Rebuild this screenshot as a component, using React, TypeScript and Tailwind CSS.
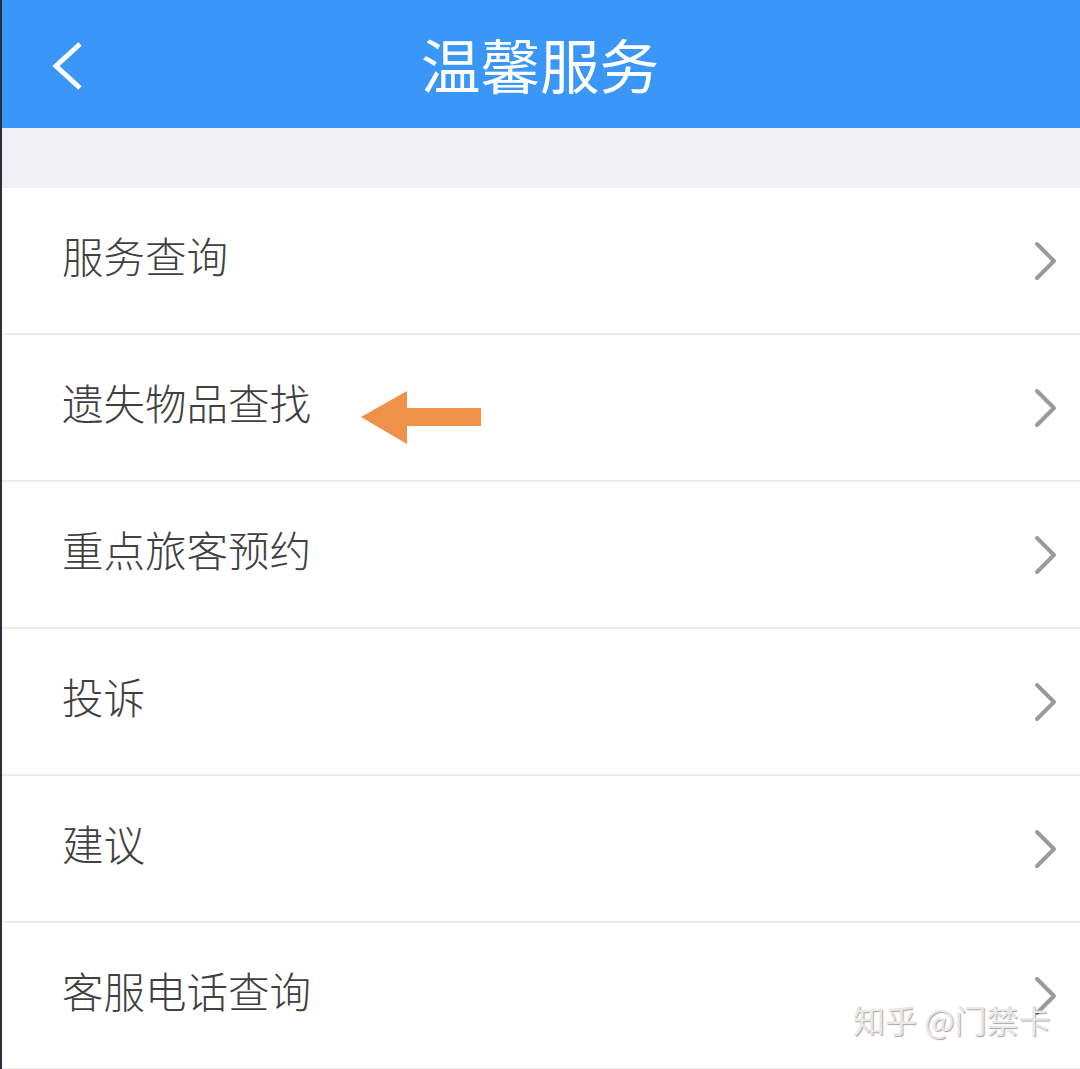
const items = ["服务查询", "遗失物品查找", "重点旅客预约", "投诉", "建议", "客服电话查询"];

function ChevronRight() {
  return (
    <svg width="28" height="40" viewBox="0 0 28 40" fill="none">
      <path d="M5 3 L22 20 L5 37" stroke="#9a9a9a" strokeWidth="4" strokeLinecap="round" strokeLinejoin="round" />
    </svg>
  );
}

function OrangeArrow() {
  return (
    <svg width="122" height="54" viewBox="0 0 122 54">
      <path d="M0 26 L46 0 L46 17 L120 17 L120 35 L46 35 L46 53 Z" fill="#f0914a" />
    </svg>
  );
}

export default function App() {
  return (
    <div className="relative w-[1080px] h-[1069px] overflow-hidden bg-white font-['Noto_Sans_CJK_SC','Noto_Sans',sans-serif]">
      {/* Header */}
      <div className="relative flex h-[128px] items-center justify-center bg-[#3a97f8]">
        <div className="absolute left-[48px] top-[40px]">
          <svg width="36" height="52" viewBox="0 0 36 52" fill="none">
            <path d="M32 4 L8 26 L32 48" stroke="white" strokeWidth="5" strokeLinejoin="miter" />
          </svg>
        </div>
        <span className="text-[59.5px] leading-none text-white">温馨服务</span>
      </div>

      {/* Gray spacer */}
      <div className="h-[60px] bg-[#efeff4]" />

      {/* List */}
      <div className="flex flex-col">
        {items.map((label, i) => (
          <div key={label} className="flex h-[147px] items-center border-b-2 border-[#ececec] pl-[62px] pr-[20px]">
            <span className="mb-[10px] text-[41.5px] font-light leading-none text-[#404040]">{label}</span>
            {i === 1 && (
              <div className="ml-[50px] mt-[20px]">
                <OrangeArrow />
              </div>
            )}
            <div className="ml-auto flex items-center">
              <ChevronRight />
            </div>
          </div>
        ))}
      </div>

      {/* Watermark */}
      <div className="absolute left-[853px] top-[1003px] text-[32px] leading-none text-[#e8e8e8] [text-shadow:1px_1px_1px_rgba(0,0,0,0.35)]">
        知乎 @门禁卡
      </div>

      {/* Dark left edge */}
      <div className="absolute left-0 top-0 h-full w-[2px] bg-[#2b2f3a]" />
    </div>
  );
}
